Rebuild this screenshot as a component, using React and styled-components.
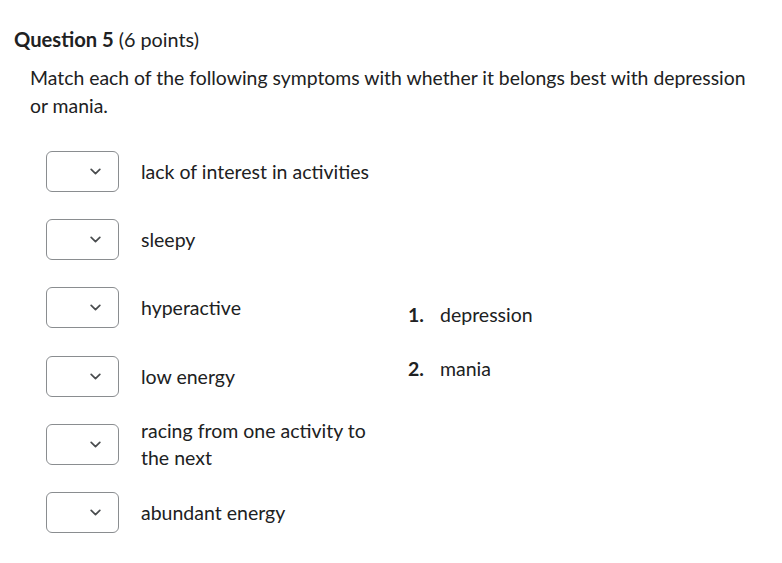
import React from 'react'
import styled, { createGlobalStyle } from 'styled-components'

const GlobalStyle = createGlobalStyle`
  body {
    margin: 0;
    background: #fff;
    font-family: Lato, "Noto Sans", sans-serif;
    color: #202122;
  }
`

const Page = styled.div`
  padding: 25px 14px 0 14px;
`

const Title = styled.h2`
  margin: 0;
  font-size: 20.2px;
  line-height: 28px;
  font-weight: 700;
  color: #202122;
  span {
    font-weight: 400;
    font-size: 19.8px;
  }
`

const Prompt = styled.p`
  margin: 11px 0 0 16px;
  font-size: 19.4px;
  line-height: 28px;
  max-width: 730px;
`

const Matching = styled.div`
  display: flex;
  align-items: center;
  margin: 17px 0 0 32px;
`

const LeftList = styled.div`
  display: flex;
  flex-direction: column;
  width: 362px;
`

const Row = styled.div`
  display: flex;
  align-items: center;
  height: 68.3px;
  gap: 22px;
`

const SelectBox = styled.div`
  flex: none;
  box-sizing: border-box;
  width: 73px;
  height: 41px;
  border: 1px solid #8a8d90;
  border-radius: 6px;
  display: flex;
  align-items: center;
  justify-content: flex-end;
  padding-right: 17px;
  background: #fff;
`

const Label = styled.div`
  font-size: 19.5px;
  line-height: 27px;
  width: 240px;
`

const Choices = styled.ol`
  list-style: none;
  margin: 0;
  padding: 0;
  display: flex;
  flex-direction: column;
  gap: 27px;
`

const Choice = styled.li`
  display: flex;
  font-size: 19.5px;
  line-height: 27px;
  b {
    width: 32px;
    font-weight: 700;
  }
`

const Chevron = () => (
  <svg width="11" height="7" viewBox="0 0 11 7">
    <path d="M1.2 1.4l4.3 4.2 4.3-4.2" fill="none" stroke="#494c4e" strokeWidth="1.7" strokeLinecap="round" strokeLinejoin="round" />
  </svg>
)

const items = [
  'lack of interest in activities',
  'sleepy',
  'hyperactive',
  'low energy',
  'racing from one activity to the next',
  'abundant energy',
]

export default function App() {
  return (
    <>
      <GlobalStyle />
      <Page>
        <Title>Question 5 <span>(6 points)</span></Title>
        <Prompt>Match each of the following symptoms with whether it belongs best with depression or mania.</Prompt>
        <Matching>
          <LeftList>
            {items.map((t) => (
              <Row key={t}>
                <SelectBox><Chevron /></SelectBox>
                <Label>{t}</Label>
              </Row>
            ))}
          </LeftList>
          <Choices>
            <Choice><b>1.</b>depression</Choice>
            <Choice><b>2.</b>mania</Choice>
          </Choices>
        </Matching>
      </Page>
    </>
  )
}
